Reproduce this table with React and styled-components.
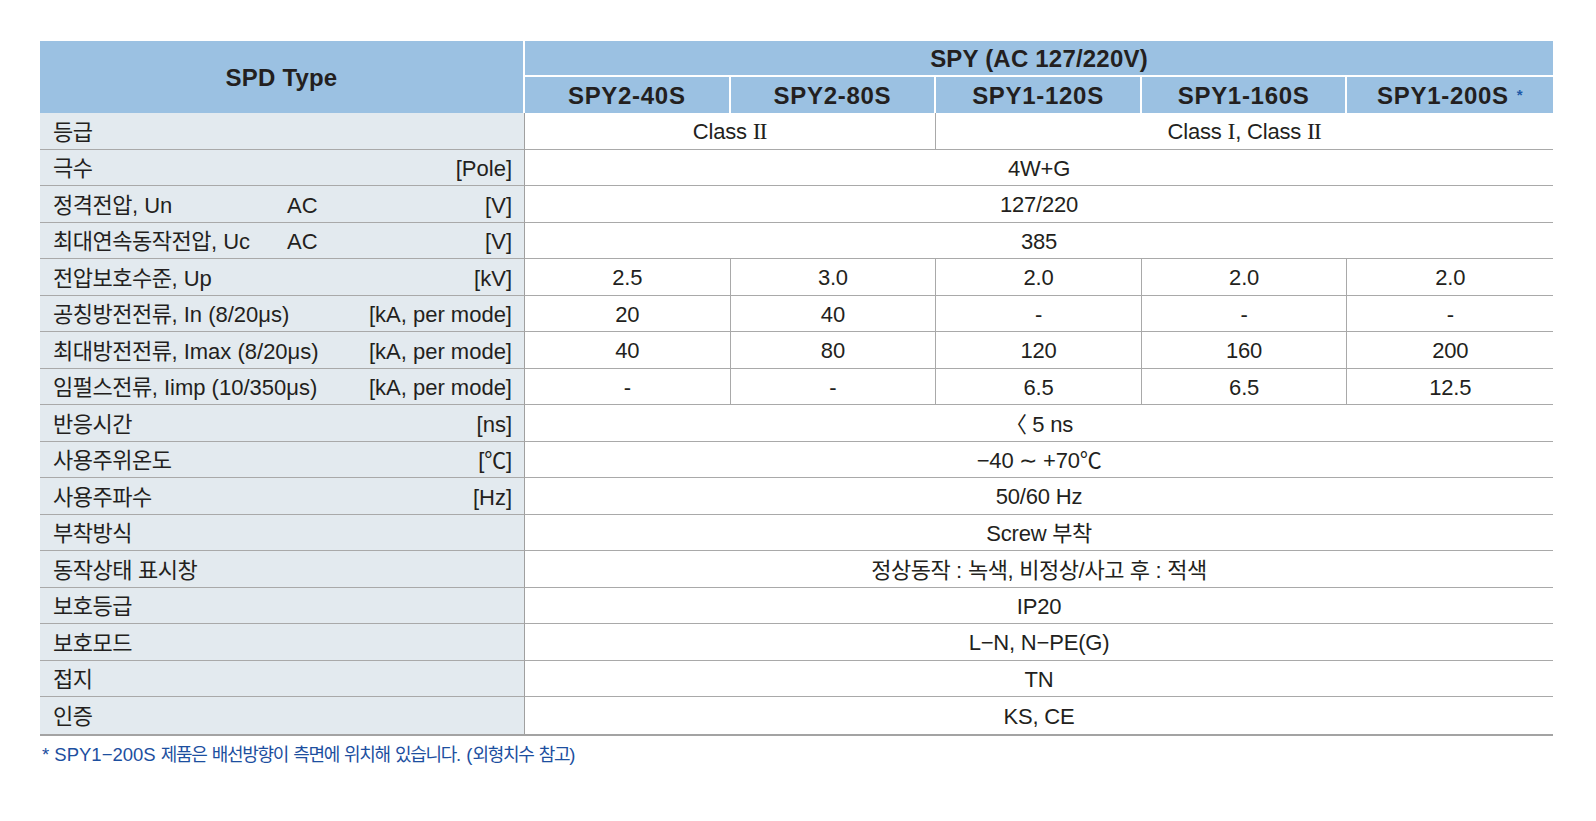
import React from 'react';
import styled, { createGlobalStyle } from 'styled-components';

const Global = createGlobalStyle`
  html, body { margin: 0; padding: 0; background: #ffffff; }
  body { font-family: "Liberation Sans", "Noto Sans CJK KR", sans-serif; color: #231f20; }
  * { box-sizing: border-box; }
`;

const Page = styled.div`
  width: 1596px;
  padding: 41px 43px 0 40px;
`;

const Table = styled.div`
  display: grid;
  grid-template-columns: 485px repeat(5, 1fr);
  grid-template-rows: 36px 36px;
  grid-auto-rows: 36.5px;
  border-bottom: 2px solid #a3a3a3;
`;

const HeadBase = styled.div`
  background: #9bc1e2;
  display: flex;
  align-items: center;
  justify-content: center;
  font-family: "Liberation Sans", "Noto Sans CJK KR", sans-serif;
  font-weight: 700;
  font-size: 24px;
  letter-spacing: 0.7px;
  color: #231f20;
  white-space: nowrap;
`;

const Corner = styled(HeadBase)`
  grid-row: 1 / span 2;
  border-right: 2px solid #ffffff;
  padding-top: 2px;
  letter-spacing: 0.2px;
`;

const GroupHead = styled(HeadBase)`
  grid-column: 2 / span 5;
  border-bottom: 2px solid #ffffff;
  padding-top: 1px;
  letter-spacing: 0.2px;
`;

const ModelHead = styled(HeadBase)`
  border-right: ${p => (p.$last ? '0' : '2px solid #ffffff')};
  padding-top: 1px;
`;

const Star = styled.span`
  color: #1f5aa8;
  font-size: 15px;
  font-weight: 700;
  margin-left: 8px;
  position: relative;
  top: -1px;
`;

const LabelCell = styled.div`
  background: #e3eaef;
  border-right: 1px solid #a0a0a0;
  border-bottom: ${p => (p.$last ? '0' : '1.5px solid #a9a9a9')};
  display: grid;
  grid-template-columns: 234px 1fr auto;
  align-items: baseline;
  align-content: center;
  padding: 3px 12px 0 13px;
  font-size: 22px;
  line-height: 26px;
  white-space: pre;
`;

const Cell = styled.div`
  grid-column: span ${p => p.$span};
  display: flex;
  align-items: center;
  justify-content: center;
  border-bottom: ${p => (p.$last ? '0' : '1.5px solid #a9a9a9')};
  border-right: ${p => (p.$end ? '0' : '1px solid #a9a9a9')};
  font-size: 22px;
  line-height: 26px;
  letter-spacing: -0.2px;
  padding-top: 3px;
  white-space: pre;
`;

const Ko = styled.span`
  font-family: "Noto Sans CJK KR", sans-serif;
  font-size: ${p => p.$size}px;
  letter-spacing: ${p => p.$ls}px;
  line-height: 1;
`;

const Roman = styled.span`
  font-family: "Liberation Serif", serif;
  font-size: 24px;
  letter-spacing: -1.2px;
  margin-right: 1px;
  line-height: 1;
`;

const Note = styled.div`
  margin-top: 8px;
  padding-left: 2px;
  color: #1d4f9f;
  font-size: 18.5px;
  white-space: pre;
`;

const KO_RE = /([\u1100-\u11FF\u3000-\u303F\u3131-\u318E\uAC00-\uD7A3\u2103]+)/;

function Mixed({ text, size = 22, ls = -0.5 }) {
  const parts = text.split(KO_RE);
  return (
    <span>
      {parts.map((p, i) =>
        KO_RE.test(p) ? (
          <Ko key={i} $size={size} $ls={ls}>{p}</Ko>
        ) : (
          <React.Fragment key={i}>{p}</React.Fragment>
        )
      )}
    </span>
  );
}

const models = ['SPY2-40S', 'SPY2-80S', 'SPY1-120S', 'SPY1-160S', 'SPY1-200S'];

const rows = [
  {
    label: '등급',
    values: [
      { node: <span>Class <Roman>II</Roman></span>, span: 2 },
      { node: <span>Class <Roman>I</Roman>, Class <Roman>II</Roman></span>, span: 3 },
    ],
  },
  { label: '극수', unit: '[Pole]', values: '4W+G' },
  { label: '정격전압, Un', mid: 'AC', unit: '[V]', values: '127/220' },
  { label: '최대연속동작전압, Uc', mid: 'AC', unit: '[V]', values: '385' },
  { label: '전압보호수준, Up', unit: '[kV]', values: ['2.5', '3.0', '2.0', '2.0', '2.0'] },
  { label: '공칭방전전류, In (8/20μs)', unit: '[kA, per mode]', values: ['20', '40', '-', '-', '-'] },
  { label: '최대방전전류, Imax (8/20μs)', unit: '[kA, per mode]', values: ['40', '80', '120', '160', '200'] },
  { label: '임펄스전류, Iimp (10/350μs)', unit: '[kA, per mode]', values: ['-', '-', '6.5', '6.5', '12.5'] },
  { label: '반응시간', unit: '[ns]', values: '〈 5 ns' },
  { label: '사용주위온도', unit: '[℃]', values: '−40 ∼ +70℃' },
  { label: '사용주파수', unit: '[Hz]', values: '50/60 Hz' },
  { label: '부착방식', values: 'Screw 부착' },
  { label: '동작상태 표시창', values: '정상동작 : 녹색, 비정상/사고 후 : 적색' },
  { label: '보호등급', values: 'IP20' },
  { label: '보호모드', values: 'L−N, N−PE(G)' },
  { label: '접지', values: 'TN' },
  { label: '인증', values: 'KS, CE' },
];

function normalize(values) {
  if (typeof values === 'string') return [{ text: values, span: 5 }];
  return values.map(v => (typeof v === 'string' ? { text: v, span: 1 } : v));
}

export default function App() {
  return (
    <>
      <Global />
      <Page>
        <Table>
          <Corner>SPD Type</Corner>
          <GroupHead>SPY (AC 127/220V)</GroupHead>
          {models.map((m, i) => (
            <ModelHead key={m} $last={i === models.length - 1}>
              <span>{m}</span>
              {i === models.length - 1 && <Star>*</Star>}
            </ModelHead>
          ))}
          {rows.map((r, ri) => {
            const last = ri === rows.length - 1;
            const cells = normalize(r.values);
            let col = 0;
            return (
              <React.Fragment key={r.label}>
                <LabelCell $last={last}>
                  <Mixed text={r.label} />
                  <span>{r.mid || ''}</span>
                  <Mixed text={r.unit || ''} />
                </LabelCell>
                {cells.map((c, ci) => {
                  col += c.span;
                  return (
                    <Cell key={ci} $span={c.span} $end={col === 5} $last={last}>
                      {c.node ? c.node : <Mixed text={c.text} />}
                    </Cell>
                  );
                })}
              </React.Fragment>
            );
          })}
        </Table>
        <Note>
          <Mixed text="* SPY1−200S 제품은 배선방향이 측면에 위치해 있습니다. (외형치수 참고)" size={18} ls={-1.3} />
        </Note>
      </Page>
    </>
  );
}
